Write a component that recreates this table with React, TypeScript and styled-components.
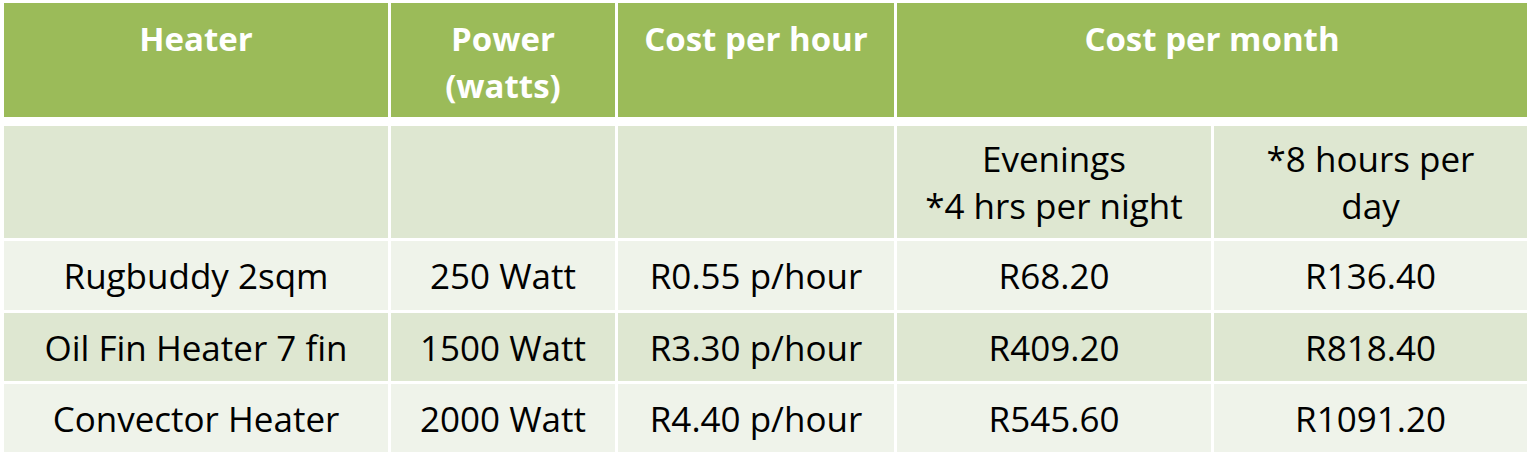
import styled, { createGlobalStyle } from "styled-components";

const GlobalStyle = createGlobalStyle`
  html, body {
    margin: 0;
    padding: 0;
    background: #ffffff;
  }
`

const Page = styled.div`
  padding: 3px 0 0 4px;
  font-family: "Open Sans", "Liberation Sans", sans-serif;
`

const Grid = styled.div`
  display: grid;
  grid-template-columns: 384px 224px 276px 314px 313px;
  grid-template-rows: 120px 112px 69px 68px 68px;
  column-gap: 3px;
  row-gap: 3px;
`

const HeadCell = styled.div<{ $span?: number }>`
  grid-column: span ${p => p.$span ?? 1};
  margin-bottom: 6px;
  background: #9bbb59;
  color: #ffffff;
  font-weight: 700;
  font-size: 33px;
  line-height: 47px;
  text-align: center;
  padding-top: 12px;
`

const Cell = styled.div<{ $tone: "dark" | "light" }>`
  display: flex;
  align-items: center;
  justify-content: center;
  background: ${p => (p.$tone === "dark" ? "#dee7d1" : "#eff3ea")};
  color: #000000;
  font-size: 35px;
  line-height: 47px;
  text-align: center;
`

const rows = [
  ["Rugbuddy 2sqm", "250 Watt", "R0.55 p/hour", "R68.20", "R136.40"],
  ["Oil Fin Heater 7 fin", "1500 Watt", "R3.30 p/hour", "R409.20", "R818.40"],
  ["Convector Heater", "2000 Watt", "R4.40 p/hour", "R545.60", "R1091.20"],
]

export default function App() {
  return (
    <Page>
      <GlobalStyle />
      <Grid>
        <HeadCell>Heater</HeadCell>
        <HeadCell>Power<br />(watts)</HeadCell>
        <HeadCell>Cost per hour</HeadCell>
        <HeadCell $span={2}>Cost per month</HeadCell>

        <Cell $tone="dark" />
        <Cell $tone="dark" />
        <Cell $tone="dark" />
        <Cell $tone="dark">Evenings<br />*4 hrs per night</Cell>
        <Cell $tone="dark">*8 hours per<br />day</Cell>

        {rows.map((row, i) =>
          row.map((text, j) => (
            <Cell key={`${i}-${j}`} $tone={i % 2 === 0 ? "light" : "dark"}>
              {text}
            </Cell>
          ))
        )}
      </Grid>
    </Page>
  )
}
